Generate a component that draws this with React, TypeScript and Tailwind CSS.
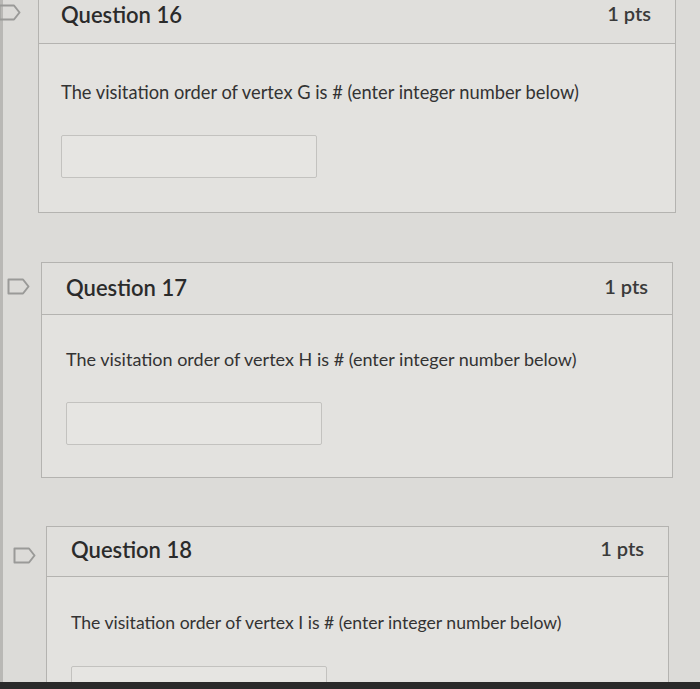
const questions = [
  { num: 16, vertex: 'G', ml: 'ml-[38px]', w: 'w-[638px]', mt: '-mt-[11px]', head: 'h-[54px] pb-[17px]', body: 'h-[168px] pt-[39px]', x: 'pl-[22px]', text: 'text-[18.3px]', flag: '-left-[2px] top-[15px]' },
  { num: 17, vertex: 'H', ml: 'ml-[41px]', w: 'w-[632px]', mt: 'mt-[49px]', head: 'h-[52px] pb-[15px]', body: 'h-[162px] pt-[35px]', x: 'pl-[24px]', text: 'text-[18px]', flag: 'left-[7px] top-[16px]' },
  { num: 18, vertex: 'I', ml: 'ml-[46px]', w: 'w-[623px]', mt: 'mt-[48px]', head: 'h-[50px] pb-[15px]', body: 'h-[120px] pt-[37px]', x: 'pl-[24px]', text: 'text-[17.6px]', flag: 'left-[13px] top-[21px]' },
]

function Bookmark() {
  return (
    <svg width="24" height="17" viewBox="0 0 24 17" fill="none">
      <path d="M1.5 1.5 H16 L21.5 8.5 L16 15.5 H1.5 Z" stroke="#9a9a98" strokeWidth="2" strokeLinejoin="round" />
    </svg>
  )
}

export default function App() {
  return (
    <div className="relative w-[700px] h-[689px] overflow-hidden bg-[#dcdbd8] font-['Lato',sans-serif] text-[#2b2b2b]">
      <div className="absolute left-0 top-0 h-full w-[3px] bg-[#b9b8b5]" />
      {questions.map((q) => (
        <div key={q.num} className={`relative ${q.mt}`}>
          {/* bookmark flag beside the card */}
          <div className={`absolute ${q.flag}`}>
            <Bookmark />
          </div>
          <div className={`${q.ml} ${q.w} border border-[#b4b3b0] bg-[#e3e2df]`}>
            <div className={`${q.head} ${q.x} pr-[24px] flex items-end justify-between border-b border-[#b4b3b0] bg-[#e0dfdc]`}>
              <span className="text-[22px] font-semibold leading-none">Question {q.num}</span>
              <span className="mb-[3px] text-[20px] font-semibold leading-none text-[#3a3a3a]">1 pts</span>
            </div>
            <div className={`${q.body} ${q.x}`}>
              <p className={`${q.text} leading-none text-[#333]`}>
                The visitation order of vertex {q.vertex} is # (enter integer number below)
              </p>
              <div className="mt-[34px] w-[256px] h-[43px] border border-[#c3c2bf] rounded-[2px] bg-[#e6e5e2]" />
            </div>
          </div>
        </div>
      ))}
      <div className="absolute left-0 bottom-0 w-full h-[7px] bg-[#2a2a2a]" />
    </div>
  )
}
